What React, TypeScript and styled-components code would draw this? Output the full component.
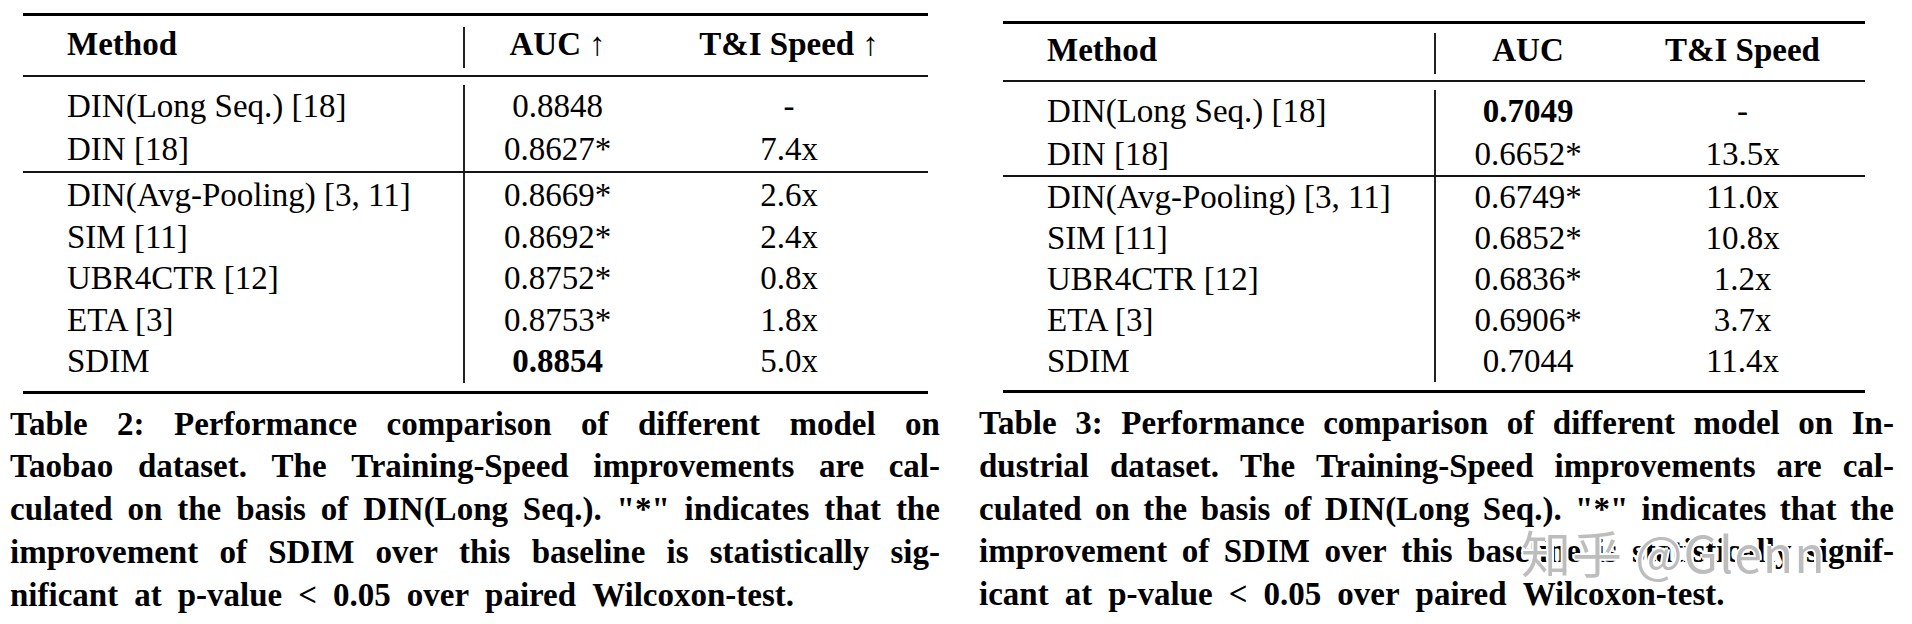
import styled, { createGlobalStyle } from 'styled-components';

type Row = { method: string; auc: string; speed: string; bold?: boolean };

type Group = {
  gap: number; // space above the group, outside the column rule
  pad: number; // space above the first row, inside the column rule
  rowH: number;
  rows: Row[];
};

type TableSpec = {
  offset: number;
  width: number;
  top: number;
  cols: number[];
  head: { h: number; pt: number; pb: number; labels: string[]; arrows: boolean };
  groups: Group[];
  bottomGap: number;
};

type FigureSpec = {
  left: number;
  width: number;
  table: TableSpec;
  caption: string[];
  watermark?: boolean;
};

const GlobalStyle = createGlobalStyle`
  html, body {
    margin: 0;
    padding: 0;
    background: #fff;
  }
  body {
    font-family: 'Liberation Serif', 'Times New Roman', serif;
    color: #000;
  }
`;

const Page = styled.main`
  display: flex;
  align-items: flex-start;
  width: 1912px;
  height: 624px;
  overflow: hidden;
  background: #fff;
`;

const Figure = styled.section<{ $left: number; $width: number }>`
  flex-shrink: 0;
  margin-left: ${(p) => p.$left}px;
  width: ${(p) => p.$width}px;
`;

const Table = styled.div<{ $offset: number; $width: number; $top: number }>`
  margin-left: ${(p) => p.$offset}px;
  margin-top: ${(p) => p.$top}px;
  width: ${(p) => p.$width}px;
  font-family: 'Liberation Serif', serif;
  font-size: 33px;
`;

const Rule = styled.div<{ $thick?: boolean }>`
  height: ${(p) => (p.$thick ? 3 : 2)}px;
  background: ${(p) => (p.$thick ? '#000' : '#151515')};
`;

const HeadRow = styled.div<{ $cols: string; $h: number; $pt: number; $pb: number }>`
  display: grid;
  grid-template-columns: ${(p) => p.$cols};
  height: ${(p) => p.$h}px;
  padding: ${(p) => p.$pt}px 0 ${(p) => p.$pb}px;
  box-sizing: border-box;
`;

const HeadCell = styled.div<{ $first?: boolean }>`
  box-sizing: border-box;
  font-weight: 700;
  line-height: 35px;
  padding-bottom: 6px;
  white-space: nowrap;
  text-align: ${(p) => (p.$first ? 'left' : 'center')};
  padding-left: ${(p) => (p.$first ? 44 : 0)}px;
  border-right: ${(p) => (p.$first ? '2px solid #222' : 'none')};
`;

const Arrow = styled.span`
  font-weight: 400;
  margin-left: 8px;
`;

const Body = styled.div<{ $cols: string; $gap: number; $bottom: number }>`
  display: grid;
  grid-template-columns: ${(p) => p.$cols};
  margin-top: ${(p) => p.$gap}px;
  margin-bottom: ${(p) => p.$bottom}px;
`;

const Column = styled.div<{ $first?: boolean; $pad: number }>`
  display: flex;
  flex-direction: column;
  box-sizing: border-box;
  padding-top: ${(p) => p.$pad}px;
  border-right: ${(p) => (p.$first ? '2px solid #222' : 'none')};
`;

const Cell = styled.div<{ $h: number; $first?: boolean; $bold?: boolean }>`
  height: ${(p) => p.$h}px;
  line-height: ${(p) => p.$h}px;
  white-space: nowrap;
  font-weight: ${(p) => (p.$bold ? 700 : 400)};
  text-align: ${(p) => (p.$first ? 'left' : 'center')};
  padding-left: ${(p) => (p.$first ? 44 : 0)}px;
`;

const Caption = styled.div`
  position: relative;
  margin-top: 9px;
  font-family: 'Liberation Serif', serif;
  font-size: 33px;
  font-weight: 700;
  line-height: 42.75px;
`;

const CaptionLine = styled.div<{ $last?: boolean }>`
  display: flex;
  justify-content: ${(p) => (p.$last ? 'flex-start' : 'space-between')};
  gap: ${(p) => (p.$last ? 16 : 0)}px;
  white-space: nowrap;
`;

const Watermark = styled.div`
  position: absolute;
  left: 542px;
  top: 124px;
  font-family: 'Noto Sans CJK SC', 'Noto Sans', sans-serif;
  font-size: 50px;
  font-weight: 400;
  line-height: 1;
  color: #bdbdbd;
  white-space: nowrap;
  letter-spacing: 1px;
  text-shadow:
    0 0 2px #fff,
    2px 0 0 #fff,
    -2px 0 0 #fff,
    0 2px 0 #fff,
    0 -2px 0 #fff;
`;

const figures: FigureSpec[] = [
  {
    left: 10,
    width: 930,
    table: {
      offset: 13,
      width: 905,
      top: 13,
      cols: [442, 185, 278],
      head: { h: 59, pt: 11, pb: 7, labels: ['Method', 'AUC', 'T&I Speed'], arrows: true },
      groups: [
        {
          gap: 8,
          pad: 0,
          rowH: 43,
          rows: [
            { method: 'DIN(Long Seq.) [18]', auc: '0.8848', speed: '-' },
            { method: 'DIN [18]', auc: '0.8627*', speed: '7.4x' },
          ],
        },
        {
          gap: 0,
          pad: 2,
          rowH: 41.5,
          rows: [
            { method: 'DIN(Avg-Pooling) [3, 11]', auc: '0.8669*', speed: '2.6x' },
            { method: 'SIM [11]', auc: '0.8692*', speed: '2.4x' },
            { method: 'UBR4CTR [12]', auc: '0.8752*', speed: '0.8x' },
            { method: 'ETA [3]', auc: '0.8753*', speed: '1.8x' },
            { method: 'SDIM', auc: '0.8854', speed: '5.0x', bold: true },
          ],
        },
      ],
      bottomGap: 8,
    },
    caption: [
      'Table 2: Performance comparison of different model on',
      'Taobao dataset. The Training-Speed improvements are cal-',
      'culated on the basis of DIN(Long Seq.). "*" indicates that the',
      'improvement of SDIM over this baseline is statistically sig-',
      'nificant at p-value < 0.05 over paired Wilcoxon-test.',
    ],
  },
  {
    left: 39,
    width: 915,
    table: {
      offset: 24,
      width: 862,
      top: 21,
      cols: [433, 184, 245],
      head: { h: 56, pt: 9, pb: 6, labels: ['Method', 'AUC', 'T&I Speed'], arrows: false },
      groups: [
        {
          gap: 8,
          pad: 0,
          rowH: 42.5,
          rows: [
            { method: 'DIN(Long Seq.) [18]', auc: '0.7049', speed: '-', bold: true },
            { method: 'DIN [18]', auc: '0.6652*', speed: '13.5x' },
          ],
        },
        {
          gap: 0,
          pad: 0,
          rowH: 41,
          rows: [
            { method: 'DIN(Avg-Pooling) [3, 11]', auc: '0.6749*', speed: '11.0x' },
            { method: 'SIM [11]', auc: '0.6852*', speed: '10.8x' },
            { method: 'UBR4CTR [12]', auc: '0.6836*', speed: '1.2x' },
            { method: 'ETA [3]', auc: '0.6906*', speed: '3.7x' },
            { method: 'SDIM', auc: '0.7044', speed: '11.4x' },
          ],
        },
      ],
      bottomGap: 8,
    },
    caption: [
      'Table 3: Performance comparison of different model on In-',
      'dustrial dataset. The Training-Speed improvements are cal-',
      'culated on the basis of DIN(Long Seq.). "*" indicates that the',
      'improvement of SDIM over this baseline is statistically signif-',
      'icant at p-value < 0.05 over paired Wilcoxon-test.',
    ],
    watermark: true,
  },
];

function ResultTable({ spec }: { spec: TableSpec }) {
  const cols = spec.cols.map((c) => `${c}px`).join(' ');
  return (
    <Table $offset={spec.offset} $width={spec.width} $top={spec.top}>
      <Rule $thick />
      <HeadRow $cols={cols} $h={spec.head.h} $pt={spec.head.pt} $pb={spec.head.pb}>
        {spec.head.labels.map((label, i) => (
          <HeadCell key={label} $first={i === 0}>
            {label}
            {spec.head.arrows && i > 0 && <Arrow>↑</Arrow>}
          </HeadCell>
        ))}
      </HeadRow>
      {spec.groups.map((group, gi) => (
        <div key={gi}>
          <Rule />
          <Body
            $cols={cols}
            $gap={group.gap}
            $bottom={gi === spec.groups.length - 1 ? spec.bottomGap : 0}
          >
            <Column $first $pad={group.pad}>
              {group.rows.map((r) => (
                <Cell key={r.method} $h={group.rowH} $first>
                  {r.method}
                </Cell>
              ))}
            </Column>
            <Column $pad={group.pad}>
              {group.rows.map((r) => (
                <Cell key={r.method} $h={group.rowH} $bold={r.bold}>
                  {r.auc}
                </Cell>
              ))}
            </Column>
            <Column $pad={group.pad}>
              {group.rows.map((r) => (
                <Cell key={r.method} $h={group.rowH}>
                  {r.speed}
                </Cell>
              ))}
            </Column>
          </Body>
        </div>
      ))}
      <Rule $thick />
    </Table>
  );
}

export default function App() {
  return (
    <>
      <GlobalStyle />
      <Page>
        {figures.map((fig) => (
          <Figure key={fig.caption[0]} $left={fig.left} $width={fig.width}>
            <ResultTable spec={fig.table} />
            <Caption>
              {fig.caption.map((line, li) => (
                <CaptionLine key={li} $last={li === fig.caption.length - 1}>
                  {line.split(' ').map((w, wi) => (
                    <span key={wi}>{w}</span>
                  ))}
                </CaptionLine>
              ))}
              {fig.watermark && <Watermark>知乎 @Glenn</Watermark>}
            </Caption>
          </Figure>
        ))}
      </Page>
    </>
  );
}
